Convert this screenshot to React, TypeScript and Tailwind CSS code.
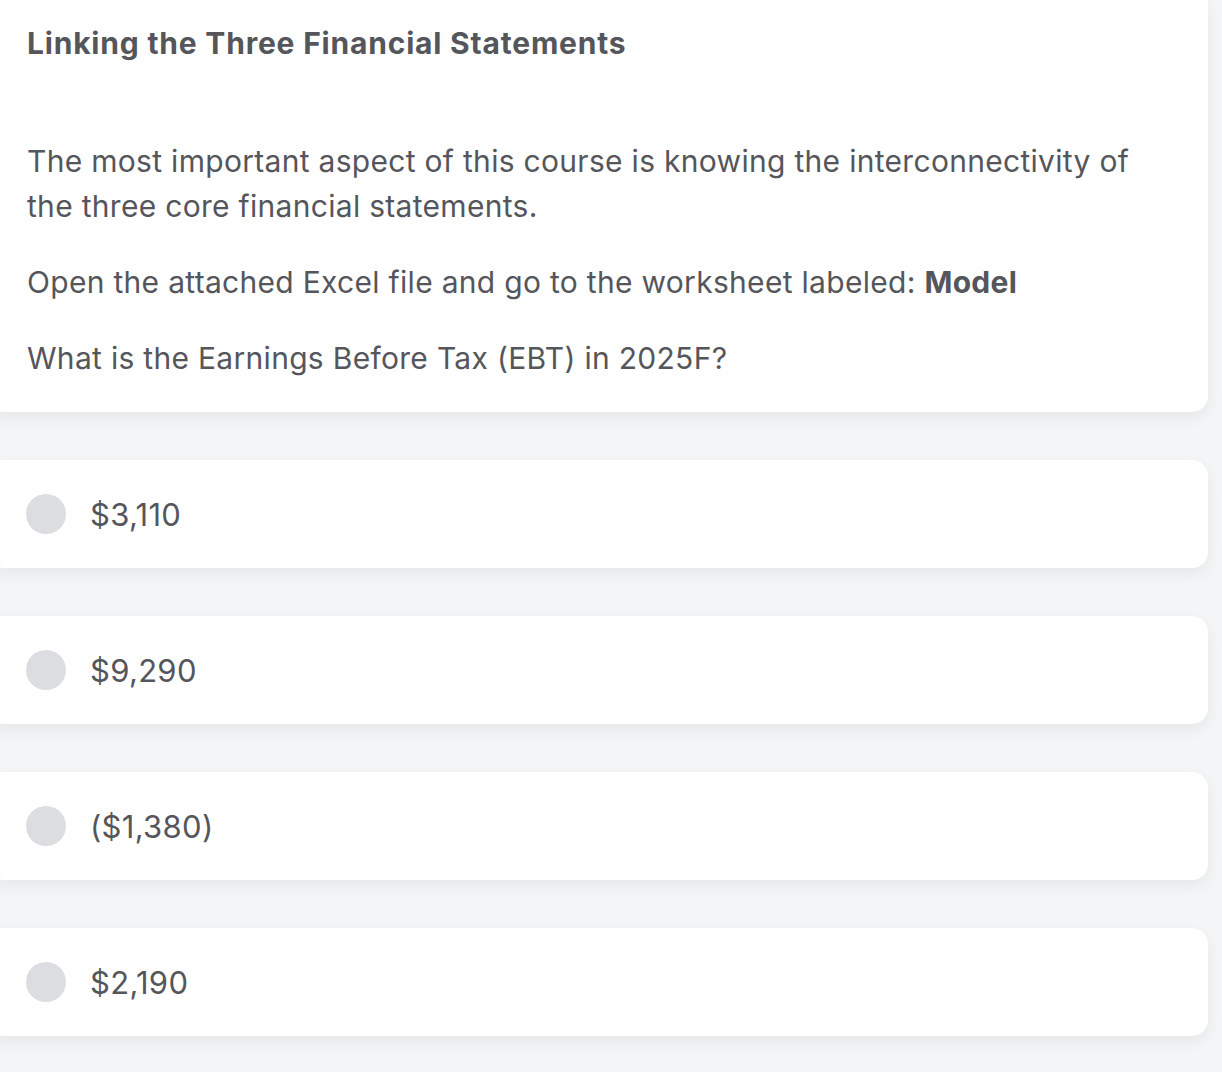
import React from 'react';

const options = ['$3,110', '$9,290', '($1,380)', '$2,190'];

export default function App() {
  return (
    <div className="min-h-[1072px] bg-[#f4f5f6] pr-[14px] pb-10 font-['Inter',_'Liberation_Sans',_sans-serif] text-[#55565b]">
      <div className="ml-[-12px] rounded-b-[16px] bg-white pl-[39px] pr-8 pt-[22px] pb-[31px] shadow-[0_6px_16px_rgba(0,0,0,0.06)]">
        <h1 className="text-[30px] font-bold leading-[42px] tracking-[0.8px]">
          Linking the Three Financial Statements
        </h1>
        <div className="mt-[75px] space-y-[31px] text-[30px] leading-[45px] tracking-[0.3px]">
          <p>
            The most important aspect of this course is knowing the interconnectivity of the three core financial
            statements.
          </p>
          <p>
            Open the attached Excel file and go to the worksheet labeled: <strong className="font-bold">Model</strong>
          </p>
          <p>What is the Earnings Before Tax (EBT) in 2025F?</p>
        </div>
      </div>

      <div className="mt-12 flex flex-col gap-12">
        {options.map((o) => (
          <div
            key={o}
            className="ml-[-12px] flex h-[108px] items-center gap-[24px] rounded-[16px] bg-white pl-[38px] shadow-[0_6px_16px_rgba(0,0,0,0.06)]"
          >
            <span className="h-10 w-10 shrink-0 rounded-full bg-[#dcdde0]" />
            <span className="text-[31px] leading-none tracking-[0.3px]">{o}</span>
          </div>
        ))}
      </div>
    </div>
  );
}
